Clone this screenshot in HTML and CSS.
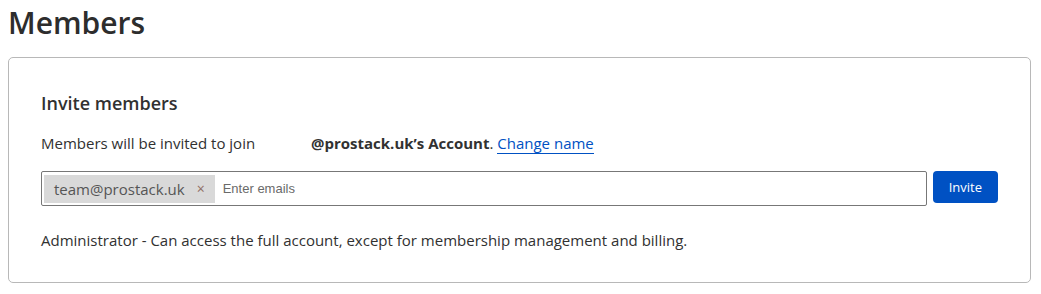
FILE: index.html
```html
<!DOCTYPE html>
<html lang="en">
<head>
  <meta charset="UTF-8">
  <meta name="viewport" content="width=device-width, initial-scale=1.0">
  <title>Members</title>
  <link rel="stylesheet" href="styles.css">
</head>
<body>
  <div class="page">
    <h1>Members</h1>

    <div class="card">
      <h2>Invite members</h2>
      <p class="invite-info">
        <span class="invite-lead">Members will be invited to join</span>
        <strong>@prostack.uk’s Account</strong>. <a href="#" class="link">Change name</a>
      </p>

      <div class="invite-row">
        <div class="email-input">
          <span class="tag">
            team@prostack.uk
            <span class="tag-remove">×</span>
          </span>
          <input type="text" placeholder="Enter emails">
        </div>
        <button class="btn-invite">Invite</button>
      </div>

      <p class="role-info">Administrator - Can access the full account, except for membership management and billing.</p>
    </div>
  </div>
</body>
</html>
```

FILE: styles.css
```css
body {
  font-family: 'Segoe UI', 'Open Sans', sans-serif;
  color: #313131;
  margin: 0;
  padding: 0 10px 0 8px;
  background-color: #fff;
}
h1 {
  font-size: 30px;
  font-weight: 600;
  color: #2d2d2d;
  margin: 3px 0 14px;
  line-height: 40px;
}
.card {
  border: 1px solid #b8b8b8;
  border-radius: 5px;
  padding: 29px 32px 30px;
}
.card h2 {
  font-size: 18px;
  font-weight: 600;
  color: #313131;
  margin: 0 0 12px;
  line-height: 32px;
}
.invite-info {
  font-size: 15px;
  margin: 0 0 16px;
  line-height: 24px;
}
.invite-lead {
  margin-right: 52px;
}
.invite-info strong {
  font-weight: 700;
}
.link {
  color: #0051c3;
  text-decoration: none;
  border-bottom: 1px solid #0051c3;
}
.invite-row {
  display: flex;
  align-items: flex-start;
  gap: 6px;
}
.email-input {
  flex: 1;
  display: flex;
  align-items: center;
  height: 33px;
  padding: 0 2px;
  border: 1px solid #777;
  border-radius: 2px;
}
.tag {
  display: flex;
  align-items: center;
  height: 28px;
  padding: 0 10px;
  background-color: #d9d9d9;
  color: #555;
  font-size: 15px;
}
.tag-remove {
  margin-left: 12px;
  color: #8f6e63;
  font-size: 14px;
}
.email-input input {
  flex: 1;
  border: none;
  outline: none;
  font-family: 'Liberation Sans', Arial, sans-serif;
  font-size: 13px;
  padding: 0 8px;
  color: #333;
}
.email-input input::placeholder {
  color: #6a6a6a;
}
.btn-invite {
  background-color: #0051c3;
  color: #fff;
  border: none;
  border-radius: 4px;
  height: 32px;
  padding: 0 16px;
  font-family: 'Segoe UI', 'Open Sans', sans-serif;
  font-size: 13px;
  cursor: pointer;
}
.role-info {
  font-size: 15px;
  margin: 22px 0 0;
  line-height: 24px;
}
```
